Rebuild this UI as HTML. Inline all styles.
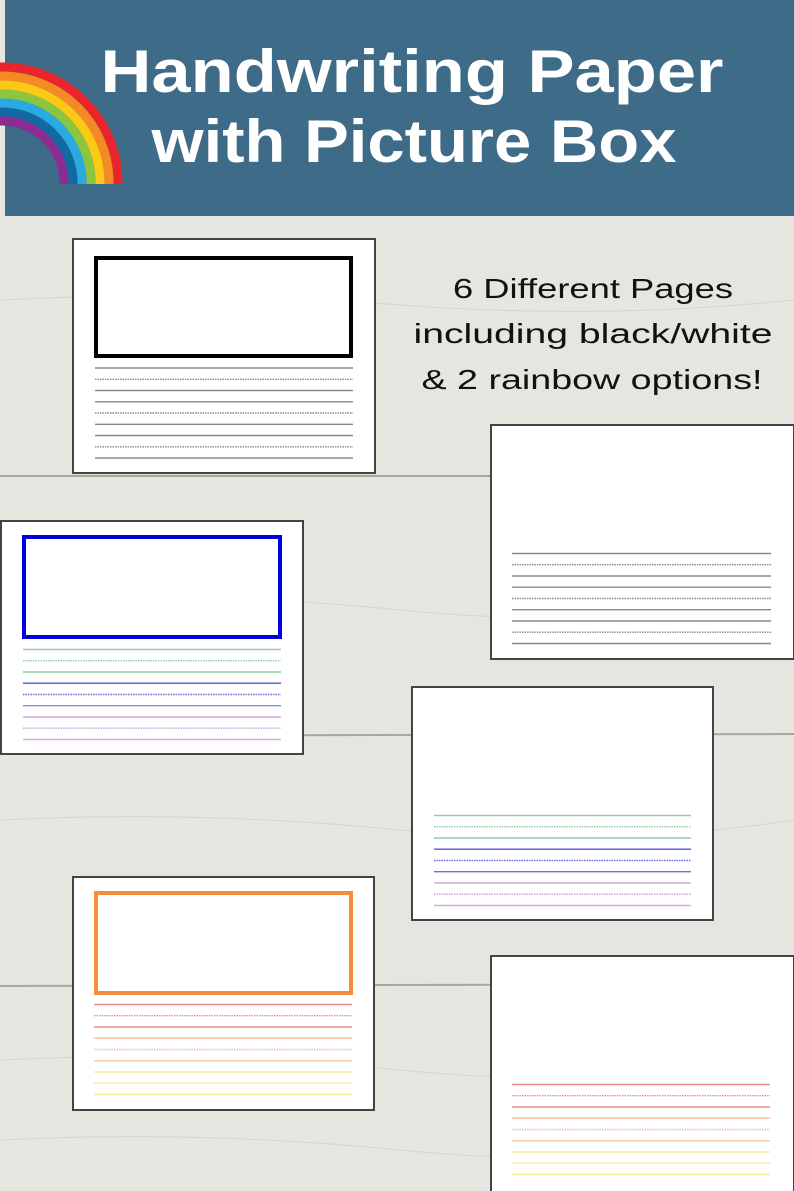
<!DOCTYPE html>
<html><head><meta charset="utf-8"><style>
html,body{margin:0;padding:0;width:794px;height:1191px;overflow:hidden;background:#e7e5e0}
svg{display:block}
</style></head><body>
<svg width="794" height="1191" viewBox="0 0 794 1191" xmlns="http://www.w3.org/2000/svg" font-family="Liberation Sans, sans-serif">
<defs>
<clipPath id="rc"><rect x="0" y="0" width="140" height="184"/></clipPath>
</defs>
<rect width="794" height="1191" fill="#e7e5e0"/>
<g stroke="#a9a6a0" stroke-width="2" fill="none">
<line x1="0" y1="476" x2="794" y2="476"/>
<line x1="0" y1="736" x2="794" y2="734"/>
<line x1="0" y1="986" x2="794" y2="984"/>
</g>
<g stroke="#d6d3cc" stroke-width="1" fill="none">
<path d="M0 300 Q200 290 400 305 T794 300"/>
<path d="M0 600 Q200 590 400 610 T794 600"/>
<path d="M0 820 Q200 810 400 830 T794 820"/>
<path d="M0 1060 Q200 1050 400 1070 T794 1060"/>
<path d="M0 1140 Q200 1130 400 1150 T794 1140"/>
</g>
<rect x="5" y="0" width="789" height="216" fill="#3d6b88"/>
<g fill="none" stroke-width="9" clip-path="url(#rc)">
<circle cx="2" cy="183" r="116" stroke="#e8252b"/>
<circle cx="2" cy="183" r="107" stroke="#f48a23"/>
<circle cx="2" cy="183" r="98" stroke="#fcc917"/>
<circle cx="2" cy="183" r="89" stroke="#8cc640"/>
<circle cx="2" cy="183" r="80" stroke="#29abe2"/>
<circle cx="2" cy="183" r="71" stroke="#136aa3"/>
<circle cx="2" cy="183" r="62" stroke="#8c2b90"/>
</g>
<g fill="#fff" font-size="60" text-anchor="middle" font-weight="bold">
<text x="412" y="92" textLength="623" lengthAdjust="spacingAndGlyphs">Handwriting Paper</text>
<text x="414" y="162" textLength="525" lengthAdjust="spacingAndGlyphs">with Picture Box</text>
</g>
<g fill="#111" font-size="28" text-anchor="middle">
<text x="593" y="298" textLength="280" lengthAdjust="spacingAndGlyphs">6 Different Pages</text>
<text x="593" y="343" textLength="359" lengthAdjust="spacingAndGlyphs">including black/white</text>
<text x="592" y="389" textLength="341" lengthAdjust="spacingAndGlyphs">&amp; 2 rainbow options!</text>
</g>
<g fill="#fff" stroke="#444" stroke-width="2">
<rect x="73" y="239" width="302" height="234"/>
<rect x="1" y="521" width="302" height="233"/>
<rect x="491" y="425" width="303" height="234"/>
<rect x="412" y="687" width="301" height="233"/>
<rect x="73" y="877" width="301" height="233"/>
<rect x="491" y="956" width="303" height="236"/>
</g>
<g fill="none" stroke-width="4">
<rect x="96" y="258" width="255" height="98" stroke="#000"/>
<rect x="24" y="537" width="256" height="100" stroke="#0000e0"/>
<rect x="96" y="893" width="255" height="100" stroke="#f48c42"/>
</g>
<g stroke-width="1.4">
<g stroke="#8a8a8a">
<line x1="95" x2="353" y1="368" y2="368"/><line x1="95" x2="353" y1="379.3" y2="379.3" stroke-dasharray="1.5 1"/><line x1="95" x2="353" y1="390.5" y2="390.5"/>
<line x1="95" x2="353" y1="401.8" y2="401.8"/><line x1="95" x2="353" y1="413" y2="413" stroke-dasharray="1.5 1"/><line x1="95" x2="353" y1="424.3" y2="424.3"/>
<line x1="95" x2="353" y1="435.5" y2="435.5"/><line x1="95" x2="353" y1="446.8" y2="446.8" stroke-dasharray="1.5 1"/><line x1="95" x2="353" y1="458" y2="458"/>
</g>
<g stroke="#8a8a8a">
<line x1="512" x2="771" y1="553.5" y2="553.5"/><line x1="512" x2="771" y1="564.7" y2="564.7" stroke-dasharray="1.5 1"/><line x1="512" x2="771" y1="576" y2="576"/>
<line x1="512" x2="771" y1="587.2" y2="587.2"/><line x1="512" x2="771" y1="598.5" y2="598.5" stroke-dasharray="1.5 1"/><line x1="512" x2="771" y1="609.7" y2="609.7"/>
<line x1="512" x2="771" y1="621" y2="621"/><line x1="512" x2="771" y1="632.2" y2="632.2" stroke-dasharray="1.5 1"/><line x1="512" x2="771" y1="643.5" y2="643.5"/>
</g>
<line x1="23" x2="281" y1="649.5" y2="649.5" stroke="#92cfa2"/><line x1="23" x2="281" y1="660.7" y2="660.7" stroke="#92cfa2" stroke-dasharray="1.5 1"/><line x1="23" x2="281" y1="672" y2="672" stroke="#92cfa2"/>
<line x1="23" x2="281" y1="683.2" y2="683.2" stroke="#5656d8"/><line x1="23" x2="281" y1="694.5" y2="694.5" stroke="#6a6ad8" stroke-dasharray="1.5 1"/><line x1="23" x2="281" y1="705.7" y2="705.7" stroke="#9090d0"/>
<line x1="23" x2="281" y1="717" y2="717" stroke="#d8a6e0"/><line x1="23" x2="281" y1="728.2" y2="728.2" stroke="#c8a0d8" stroke-dasharray="1.5 1"/><line x1="23" x2="281" y1="739.5" y2="739.5" stroke="#d8a6e0"/>
<line x1="434" x2="691" y1="815.5" y2="815.5" stroke="#92cfa2"/><line x1="434" x2="691" y1="826.7" y2="826.7" stroke="#92cfa2" stroke-dasharray="1.5 1"/><line x1="434" x2="691" y1="838" y2="838" stroke="#92cfa2"/>
<line x1="434" x2="691" y1="849.2" y2="849.2" stroke="#5656d8"/><line x1="434" x2="691" y1="860.5" y2="860.5" stroke="#6a6ad8" stroke-dasharray="1.5 1"/><line x1="434" x2="691" y1="871.7" y2="871.7" stroke="#7070d0"/>
<line x1="434" x2="691" y1="883" y2="883" stroke="#d8a6e0"/><line x1="434" x2="691" y1="894.2" y2="894.2" stroke="#c8a0d8" stroke-dasharray="1.5 1"/><line x1="434" x2="691" y1="905.5" y2="905.5" stroke="#d8a6e0"/>
<line x1="94" x2="352" y1="1004.5" y2="1004.5" stroke="#ee8c8c"/><line x1="94" x2="352" y1="1015.7" y2="1015.7" stroke="#ee8c8c" stroke-dasharray="1.5 1"/><line x1="94" x2="352" y1="1027" y2="1027" stroke="#ee8c8c"/>
<line x1="94" x2="352" y1="1038.2" y2="1038.2" stroke="#f5bc98"/><line x1="94" x2="352" y1="1049.5" y2="1049.5" stroke="#f5bc98" stroke-dasharray="1.5 1"/><line x1="94" x2="352" y1="1060.7" y2="1060.7" stroke="#f5c8b0"/>
<line x1="94" x2="352" y1="1072" y2="1072" stroke="#f3ec9c"/><line x1="94" x2="352" y1="1083.2" y2="1083.2" stroke="#f3ec9c"/><line x1="94" x2="352" y1="1094.5" y2="1094.5" stroke="#f3ec9c"/>
<line x1="512" x2="770" y1="1084.5" y2="1084.5" stroke="#ee8c8c"/><line x1="512" x2="770" y1="1095.7" y2="1095.7" stroke="#ee8c8c" stroke-dasharray="1.5 1"/><line x1="512" x2="770" y1="1107" y2="1107" stroke="#ee8c8c"/>
<line x1="512" x2="770" y1="1118.2" y2="1118.2" stroke="#f5bc98"/><line x1="512" x2="770" y1="1129.5" y2="1129.5" stroke="#f5bc98" stroke-dasharray="1.5 1"/><line x1="512" x2="770" y1="1140.7" y2="1140.7" stroke="#f5c8b0"/>
<line x1="512" x2="770" y1="1152" y2="1152" stroke="#f3ec9c"/><line x1="512" x2="770" y1="1163.2" y2="1163.2" stroke="#f3ec9c"/><line x1="512" x2="770" y1="1174.5" y2="1174.5" stroke="#f3ec9c"/>
</g>
</svg>
</body></html>
